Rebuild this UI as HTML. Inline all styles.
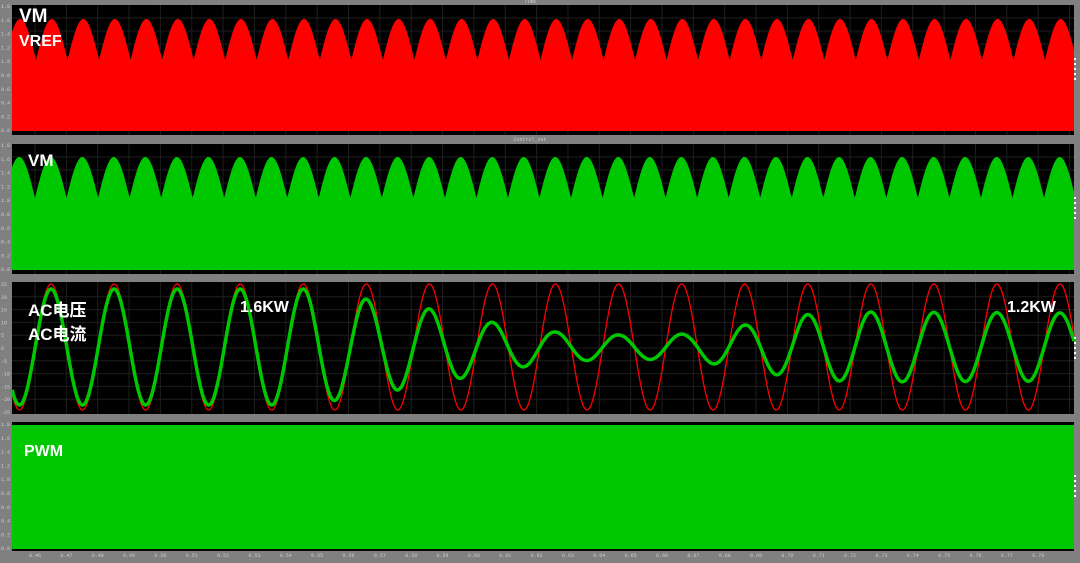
<!DOCTYPE html>
<html><head><meta charset="utf-8"><style>
html,body{margin:0;padding:0;background:#808080;width:1080px;height:563px;overflow:hidden}
svg{display:block}
.lbl{font-family:"Liberation Sans","Noto Sans CJK SC",sans-serif;font-weight:bold;fill:#fff}
.ax{font-family:"Liberation Mono",monospace;font-size:5px;fill:#ccc}
</style></head><body>
<svg id="s" width="1080" height="563" xmlns="http://www.w3.org/2000/svg">
<rect width="1080" height="563" fill="#808080"/>
<rect x="12" y="5" width="1062" height="130" fill="#000"/>
<rect x="12" y="144" width="1062" height="130" fill="#000"/>
<rect x="12" y="282" width="1062" height="132" fill="#000"/>
<rect x="12" y="422" width="1062" height="129" fill="#000"/>
<g id="grid" stroke="#1e1e1e" stroke-width="1"></g>
<path id="p1" fill="#ff0000"/>
<path id="p2" fill="#00c800"/>
<path id="p3r" fill="none" stroke="#ff0000" stroke-width="1.3"/>
<path id="p3g" fill="none" stroke="#00c800" stroke-width="3.5"/>
<rect x="12" y="425" width="1062" height="124" fill="#00c800"/>
<text x="530" y="3" class="ax" text-anchor="middle">Time</text>
<text x="530" y="141" class="ax" text-anchor="middle">Control_out</text>
<g id="axl"></g>
<text x="19" y="22" class="lbl" font-size="19">VM</text>
<text x="19" y="46" class="lbl" font-size="16">VREF</text>
<text x="28" y="166" class="lbl" font-size="17">VM</text>
<text x="28" y="316" class="lbl" font-size="17">AC电压</text>
<text x="28" y="340" class="lbl" font-size="17">AC电流</text>
<text x="240" y="312" class="lbl" font-size="16">1.6KW</text>
<text x="1007" y="312" class="lbl" font-size="16">1.2KW</text>
<text x="24" y="456" class="lbl" font-size="16">PWM</text>
</svg>
<script>
var P=63.06;
function dome(yv,amp,bot,x0){var d="M12,"+bot;for(var x=12;x<=1074;x+=0.5){var y=yv-amp*Math.abs(Math.sin(Math.PI*(x-x0)/(P/2)));d+=" L"+x+","+y.toFixed(2);}return d+" L1074,"+bot+" Z";}
document.getElementById('p1').setAttribute('d',dome(60,41,131,36));
document.getElementById('p2').setAttribute('d',dome(198,41,270,35));
function env(x){var pts=[[12,58],[310,58],[365,48],[430,38],[490,25],[555,15],[620,12],[690,13],[745,22],[800,32],[860,35],[1074,34]];for(var i=0;i<pts.length-1;i++){if(x<=pts[i+1][0]){var t=(x-pts[i][0])/(pts[i+1][0]-pts[i][0]);return pts[i][1]+t*(pts[i+1][1]-pts[i][1]);}}return 34;}
var x0=51-P/4;
var dr="",dg="";for(var x=12;x<=1074;x+=0.5){var s=Math.sin(2*Math.PI*(x-x0)/P);dr+=(x==12?"M":" L")+x+","+(347-63*s).toFixed(2);dg+=(x==12?"M":" L")+x+","+(347-env(x)*s).toFixed(2);}
document.getElementById('p3r').setAttribute('d',dr);document.getElementById('p3g').setAttribute('d',dg);
var g=document.getElementById('grid'),h="";
for(var x=35;x<1074;x+=31.35){h+='<line x1="'+x+'" y1="5" x2="'+x+'" y2="135"/><line x1="'+x+'" y1="144" x2="'+x+'" y2="274"/><line x1="'+x+'" y1="282" x2="'+x+'" y2="414"/>';}
[[5,135],[144,274]].forEach(function(r){for(var i=1;i<10;i++){var y=r[0]+i*(r[1]-r[0])/10;h+='<line x1="12" y1="'+y+'" x2="1074" y2="'+y+'"/>';}});
for(var i=1;i<10;i++){var y=284+i*12.8;h+='<line x1="12" y1="'+y+'" x2="1074" y2="'+y+'"/>';}
g.innerHTML=h;
var a="";for(var i=0;i<=32;i++){var x=35+i*31.35;a+='<text x="'+x+'" y="557" class="ax" text-anchor="middle">0.'+(46+i)+'</text>';}
var yl=["1.8","1.6","1.4","1.2","1.0","0.8","0.6","0.4","0.2","0.0"];
for(var i=0;i<10;i++){a+='<text x="1" y="'+(8+i*13.8)+'" class="ax">'+yl[i]+'</text>';a+='<text x="1" y="'+(147+i*13.8)+'" class="ax">'+yl[i]+'</text>';a+='<text x="1" y="'+(426+i*13.8)+'" class="ax">'+yl[i]+'</text>';}
var yl3=["25","20","15","10","5","0","-5","-10","-15","-20","-25"];for(var i=0;i<11;i++){a+='<text x="1" y="'+(286+i*12.8)+'" class="ax">'+yl3[i]+'</text>';}
for(var k=0;k<5;k++){a+='<rect x="1074" y="'+(58+k*5)+'" width="2" height="2" fill="#fff"/><rect x="1074" y="'+(197+k*5)+'" width="2" height="2" fill="#fff"/><rect x="1074" y="'+(337+k*5)+'" width="2" height="2" fill="#fff"/><rect x="1074" y="'+(475+k*5)+'" width="2" height="2" fill="#fff"/>';}
document.getElementById('axl').innerHTML=a;
</script>
</body></html>
